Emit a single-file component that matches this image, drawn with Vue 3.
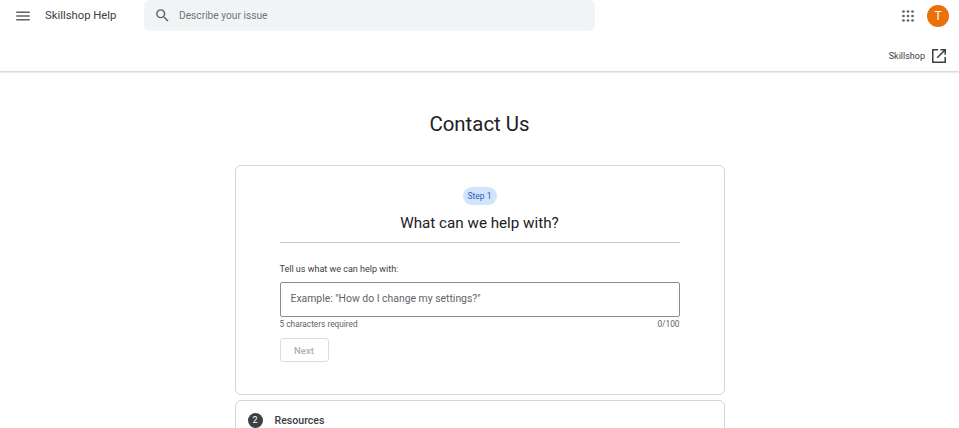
<template>
  <div class="page">
    <header class="topbar">
      <div class="top-row">
        <svg class="menu-icon" width="18" height="18" viewBox="0 0 24 24" fill="#5f6368">
          <path d="M3 18h18v-2H3v2zm0-5h18v-2H3v2zm0-7v2h18V6H3z" />
        </svg>
        <span class="product">Skillshop Help</span>
        <div class="search">
          <svg width="17" height="17" viewBox="0 0 24 24" fill="#5f6368">
            <path d="M15.5 14h-.79l-.28-.27A6.47 6.47 0 0 0 16 9.5 6.5 6.5 0 1 0 9.5 16c1.61 0 3.09-.59 4.23-1.57l.27.28v.79l5 4.99L20.49 19l-4.99-5zm-6 0C7.01 14 5 11.99 5 9.5S7.01 5 9.5 5 14 7.01 14 9.5 11.99 14 9.5 14z" />
          </svg>
          <span class="search-text">Describe your issue</span>
        </div>
        <div class="top-right">
          <svg width="18" height="18" viewBox="0 0 24 24" fill="#5f6368">
            <circle v-for="dot in appDots" :key="dot.id" :cx="dot.x" :cy="dot.y" r="1.8" />
          </svg>
          <div class="avatar">T</div>
        </div>
      </div>
      <div class="sub-row">
        <span class="skillshop">Skillshop</span>
        <svg width="16" height="16" viewBox="0 0 18 18" fill="none" stroke="#3c4043" stroke-width="1.7">
          <path d="M8 2H2v14h14v-6" />
          <path d="M10.5 2H16v5.5M16 2 7 11" />
        </svg>
      </div>
    </header>

    <main class="content">
      <h1>Contact Us</h1>

      <section class="card step-card">
        <div class="step-chip">Step 1</div>
        <h2>What can we help with?</h2>
        <div class="divider"></div>
        <div class="field-label">Tell us what we can help with:</div>
        <div class="field">Example: "How do I change my settings?"</div>
        <div class="field-meta">
          <span>5 characters required</span>
          <span>0/100</span>
        </div>
        <button class="next" disabled>Next</button>
      </section>

      <section class="card collapsed">
        <span class="num">2</span>
        <span class="collapsed-title">Resources</span>
      </section>
    </main>
  </div>
</template>

<script setup>
const appDots = [];
for (const y of [6, 12, 18]) {
  for (const x of [6, 12, 18]) {
    appDots.push({ id: `${x}-${y}`, x, y });
  }
}
</script>

<style>
html,
body {
  margin: 0;
  background: #fff;
  overflow: hidden;
}
</style>

<style scoped>
.page {
  width: 959px;
  height: 428px;
  overflow: hidden;
  font-family: Roboto, "Liberation Sans", sans-serif;
  color: #202124;
}

.topbar {
  height: 71px;
  border-bottom: 1px solid #dadce0;
  box-shadow: 0 1px 1px rgba(60, 64, 67, 0.1);
}

.top-row {
  display: flex;
  align-items: center;
  height: 32px;
  padding: 0 10px 0 14px;
}

.menu-icon {
  flex: none;
}

.product {
  flex: none;
  margin-left: 13px;
  width: 99px;
  font-size: 11.3px;
  line-height: 32px;
  color: #3c4043;
  white-space: nowrap;
}

.search {
  display: flex;
  align-items: center;
  width: 451px;
  height: 31px;
  box-sizing: border-box;
  padding-left: 10px;
  margin-bottom: 1px;
  background: #f1f3f4;
  border-radius: 6px;
}

.search-text {
  margin-left: 8px;
  font-size: 10.2px;
  color: #70757a;
}

.top-right {
  display: flex;
  align-items: center;
  gap: 10px;
  margin-left: auto;
}

.avatar {
  width: 22px;
  height: 22px;
  border-radius: 50%;
  background: #e8710a;
  color: #fff;
  font-size: 12px;
  line-height: 22px;
  text-align: center;
}

.sub-row {
  display: flex;
  align-items: center;
  justify-content: flex-end;
  gap: 6px;
  height: 16px;
  padding: 16px 12px 0 0;
}

.skillshop {
  font-size: 9px;
  color: #3c4043;
}

.content {
  display: flex;
  flex-direction: column;
  align-items: center;
}

h1 {
  margin: 37px 0 26px;
  font-size: 20.4px;
  line-height: 30px;
  font-weight: 400;
  color: #202124;
}

.card {
  width: 490px;
  box-sizing: border-box;
  border: 1px solid #d4d6d9;
  border-radius: 6px;
  background: #fff;
}

.step-card {
  display: flex;
  flex-direction: column;
  height: 230px;
  padding: 21px 44px 0;
}

.step-chip {
  align-self: center;
  padding: 0 5px;
  height: 18px;
  line-height: 18px;
  border-radius: 9px;
  background: #d2e3fc;
  color: #2f62b8;
  font-size: 8.5px;
}

h2 {
  margin: 8px 0 9px;
  text-align: center;
  font-size: 15.2px;
  line-height: 20px;
  font-weight: 400;
}

.divider {
  height: 1px;
  background: #c4c7c9;
}

.field-label {
  margin-top: 20px;
  font-size: 9px;
  line-height: 12px;
  color: #3c4043;
}

.field {
  margin-top: 7px;
  height: 35px;
  box-sizing: border-box;
  padding: 0 10px;
  border: 1px solid #8a8d91;
  border-radius: 2px;
  font-size: 10.4px;
  line-height: 31px;
  color: #5f6368;
}

.field-meta {
  display: flex;
  justify-content: space-between;
  margin-top: 2px;
  font-size: 8.3px;
  line-height: 10px;
  color: #5f6368;
}

.next {
  align-self: flex-start;
  margin-top: 9px;
  width: 49px;
  height: 24px;
  padding: 0;
  border: 1px solid #dadce0;
  border-radius: 3px;
  background: #fff;
  color: #aeb1b4;
  font-family: inherit;
  font-size: 9.5px;
  font-weight: 500;
}

.collapsed {
  display: flex;
  align-items: center;
  height: 40px;
  margin-top: 5px;
  padding-left: 12px;
}

.num {
  width: 15px;
  height: 15px;
  border-radius: 50%;
  background: #3c4043;
  color: #fff;
  font-size: 9px;
  line-height: 15px;
  text-align: center;
}

.collapsed-title {
  margin-left: 12px;
  font-size: 10.6px;
  font-weight: 500;
  color: #3c4043;
}
</style>
